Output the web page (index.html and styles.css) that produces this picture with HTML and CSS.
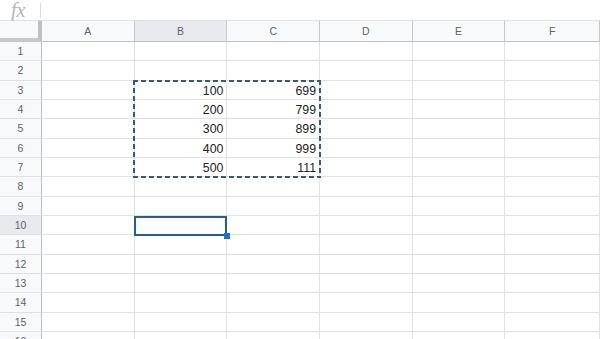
FILE: index.html
```html
<!DOCTYPE html>
<html>
<head>
<meta charset="utf-8">
<link rel="stylesheet" href="styles.css">
</head>
<body>
<div class="formula-bar">
  <span class="fx">fx</span>
  <span class="sep"></span>
</div>
<div class="stack">
  <div class="sheet">
    <div class="corner"></div><div class="h">A</div><div class="h on">B</div><div class="h">C</div><div class="h">D</div><div class="h">E</div><div class="h">F</div>
    <div class="r">1</div><div class="c"></div><div class="c"></div><div class="c"></div><div class="c"></div><div class="c"></div><div class="c"></div>
    <div class="r">2</div><div class="c"></div><div class="c"></div><div class="c"></div><div class="c"></div><div class="c"></div><div class="c"></div>
    <div class="r">3</div><div class="c"></div><div class="c">100</div><div class="c">699</div><div class="c"></div><div class="c"></div><div class="c"></div>
    <div class="r">4</div><div class="c"></div><div class="c">200</div><div class="c">799</div><div class="c"></div><div class="c"></div><div class="c"></div>
    <div class="r">5</div><div class="c"></div><div class="c">300</div><div class="c">899</div><div class="c"></div><div class="c"></div><div class="c"></div>
    <div class="r">6</div><div class="c"></div><div class="c">400</div><div class="c">999</div><div class="c"></div><div class="c"></div><div class="c"></div>
    <div class="r">7</div><div class="c"></div><div class="c">500</div><div class="c">111</div><div class="c"></div><div class="c"></div><div class="c"></div>
    <div class="r">8</div><div class="c"></div><div class="c"></div><div class="c"></div><div class="c"></div><div class="c"></div><div class="c"></div>
    <div class="r">9</div><div class="c"></div><div class="c"></div><div class="c"></div><div class="c"></div><div class="c"></div><div class="c"></div>
    <div class="r on">10</div><div class="c"></div><div class="c"></div><div class="c"></div><div class="c"></div><div class="c"></div><div class="c"></div>
    <div class="r">11</div><div class="c"></div><div class="c"></div><div class="c"></div><div class="c"></div><div class="c"></div><div class="c"></div>
    <div class="r">12</div><div class="c"></div><div class="c"></div><div class="c"></div><div class="c"></div><div class="c"></div><div class="c"></div>
    <div class="r">13</div><div class="c"></div><div class="c"></div><div class="c"></div><div class="c"></div><div class="c"></div><div class="c"></div>
    <div class="r">14</div><div class="c"></div><div class="c"></div><div class="c"></div><div class="c"></div><div class="c"></div><div class="c"></div>
    <div class="r">15</div><div class="c"></div><div class="c"></div><div class="c"></div><div class="c"></div><div class="c"></div><div class="c"></div>
    <div class="r">16</div><div class="c"></div><div class="c"></div><div class="c"></div><div class="c"></div><div class="c"></div><div class="c"></div>
  </div>
  <div class="overlay">
    <div class="copy-range"></div>
    <div class="selection"></div>
  </div>
</div>
</body>
</html>
```
FILE: styles.css
```css
html, body {
  margin: 0;
  padding: 0;
  background: #fff;
  width: 600px;
  height: 339px;
  overflow: hidden;
  font-family: "Liberation Sans", Arial, sans-serif;
}

.formula-bar {
  height: 20px;
  display: flex;
  align-items: center;
  border-bottom: 1px solid #e1e1e1;
}

.fx {
  width: 40px;
  box-sizing: border-box;
  padding-left: 11px;
  font-family: "Liberation Serif", serif;
  font-style: italic;
  font-size: 20px;
  color: #b4b4b4;
  line-height: 20px;
}

.sep {
  width: 1px;
  height: 15px;
  background: #dcdcdc;
}

.stack {
  display: grid;
}

.stack > * {
  grid-area: 1 / 1;
}

.sheet,
.overlay {
  display: grid;
  grid-template-columns: 42px repeat(5, 92.7px) 1fr;
  grid-template-rows: 21px;
  grid-auto-rows: 19.33px;
}

.sheet > div {
  box-sizing: border-box;
}

.corner {
  background: #f8f9fa;
  border-right: 4px solid #c0c0c0;
  border-bottom: 4px solid #c9c9c9;
}

.h {
  background: #f8f9fa;
  border-right: 1px solid #c8c8c8;
  border-bottom: 1px solid #c0c0c0;
  color: #5f6368;
  font-size: 10.5px;
  display: flex;
  align-items: center;
  justify-content: center;
}

.r {
  background: #f8f9fa;
  border-right: 1px solid #c0c0c0;
  border-bottom: 1px solid #e0e0e0;
  color: #5f6368;
  font-size: 10.5px;
  display: flex;
  align-items: center;
  justify-content: center;
}

.h.on,
.r.on {
  background: #e8eaed;
}

.c {
  border-right: 1px solid #e2e2e3;
  border-bottom: 1px solid #e2e2e3;
  font-size: 12.3px;
  color: #222;
  text-align: right;
  padding-right: 3px;
  line-height: 21px;
}

.overlay {
  pointer-events: none;
}

.copy-range {
  grid-column: 3 / 5;
  grid-row: 4 / 9;
  margin: -1px -1px -1px -2px;
  background:
    repeating-linear-gradient(90deg, #2c5f80 0 5px, transparent 5px 8px) top left / 100% 2px no-repeat,
    repeating-linear-gradient(90deg, #2c5f80 0 5px, transparent 5px 8px) bottom left / 100% 2px no-repeat,
    repeating-linear-gradient(180deg, #2c5f80 0 5px, transparent 5px 8px) top left / 2px 100% no-repeat,
    repeating-linear-gradient(180deg, #2c5f80 0 5px, transparent 5px 8px) top right / 2px 100% no-repeat;
}

.selection {
  grid-column: 3 / 4;
  grid-row: 11 / 12;
  margin: 0 0 -1px -1px;
  border: 2px solid #1f5f9c;
  position: relative;
}

.selection::after {
  content: "";
  position: absolute;
  right: -5px;
  bottom: -5px;
  width: 6px;
  height: 6px;
  background: #1a6fd0;
}
```
